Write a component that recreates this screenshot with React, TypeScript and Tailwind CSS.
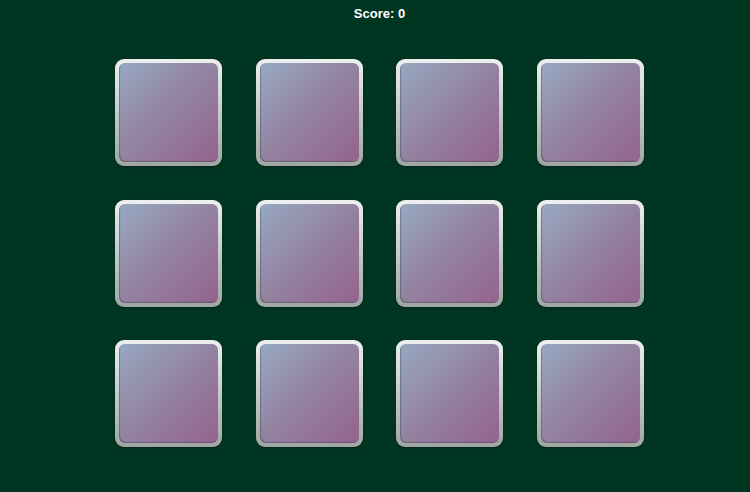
const cards = Array.from({ length: 12 }, (_, i) => i)

function Card() {
  return (
    <div className="w-[107px] h-[107px] rounded-[9px] p-[4px] bg-gradient-to-b from-[#eef0ef] to-[#9fa6a3] shadow-[0_1px_2px_rgba(0,0,0,0.3)]">
      <div className="w-full h-full rounded-[6px] bg-gradient-to-br from-[#97a9c2] via-[#9382a0] to-[#94638e] shadow-[inset_1px_-1px_1px_rgba(0,40,30,0.3)]" />
    </div>
  )
}

export default function App() {
  return (
    <div className="w-[750px] h-[492px] bg-[#003522] pl-[9px] flex flex-col items-center font-['Liberation_Sans',Arial,sans-serif]">
      <div className="pt-[6px] h-[59px] text-white font-bold text-[13px] leading-[16px]">Score: 0</div>
      <div className="grid grid-cols-[repeat(4,107px)] gap-x-[33.5px] gap-y-[33.5px]">
        {cards.map((c) => (
          <Card key={c} />
        ))}
      </div>
    </div>
  )
}
